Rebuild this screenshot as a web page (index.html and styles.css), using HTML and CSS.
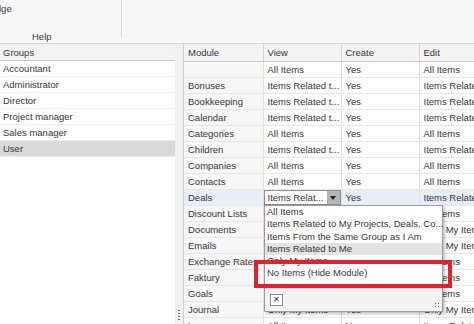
FILE: index.html
```html
<!DOCTYPE html>
<html lang="en">
<head>
  <meta charset="UTF-8">
  <title>Permissions</title>
  <link rel="stylesheet" href="styles.css">
</head>
<body>

<header class="ribbon">
  <div class="ribbon-group">
    <div class="ribbon-title">lge</div>
    <div class="ribbon-label">Help</div>
  </div>
  <div class="ribbon-sep"></div>
</header>

<div class="main">
  <div class="groups">
    <div class="groups-head">Groups</div>
    <div class="group-row">Accountant</div>
    <div class="group-row">Administrator</div>
    <div class="group-row">Director</div>
    <div class="group-row">Project manager</div>
    <div class="group-row">Sales manager</div>
    <div class="group-row selected">User</div>
  </div>

  <div class="splitter"><span class="grip"></span></div>

  <div class="grid-wrap">
    <table class="grid">
      <colgroup>
        <col class="c-module"><col class="c-view"><col class="c-create"><col class="c-edit">
      </colgroup>
      <thead>
        <tr><th>Module</th><th>View</th><th>Create</th><th>Edit</th></tr>
      </thead>
      <tbody>
        <tr><td class="mod"></td><td>All Items</td><td>Yes</td><td>All Items</td></tr>
        <tr><td class="mod">Bonuses</td><td>Items Related t...</td><td>Yes</td><td>Items Related t...</td></tr>
        <tr><td class="mod">Bookkeeping</td><td>Items Related t...</td><td>Yes</td><td>Items Related t...</td></tr>
        <tr><td class="mod">Calendar</td><td>Items Related t...</td><td>Yes</td><td>Items Related t...</td></tr>
        <tr><td class="mod">Categories</td><td>All Items</td><td>Yes</td><td>All Items</td></tr>
        <tr><td class="mod">Children</td><td>Items Related t...</td><td>Yes</td><td>Items Related t...</td></tr>
        <tr><td class="mod">Companies</td><td>All Items</td><td>Yes</td><td>All Items</td></tr>
        <tr><td class="mod">Contacts</td><td>All Items</td><td>Yes</td><td>All Items</td></tr>
        <tr class="active">
          <td class="mod">Deals</td>
          <td class="combo-cell">
            <div class="combo">
              <span class="combo-text">Items Relat...</span>
              <span class="combo-btn"></span>
            </div>
          </td>
          <td>Yes</td><td>Items Related t...</td>
        </tr>
        <tr><td class="mod">Discount Lists</td><td>All Items</td><td>Yes</td><td>All Items</td></tr>
        <tr><td class="mod">Documents</td><td>Only My Items</td><td>Yes</td><td>Only My Items</td></tr>
        <tr><td class="mod">Emails</td><td>Only My Items</td><td>Yes</td><td>Only My Items</td></tr>
        <tr><td class="mod">Exchange Rates</td><td>All Items</td><td>Yes</td><td>All Items</td></tr>
        <tr><td class="mod">Faktury</td><td>All Items</td><td>Yes</td><td>All Items</td></tr>
        <tr><td class="mod">Goals</td><td>All Items</td><td>Yes</td><td>All Items</td></tr>
        <tr><td class="mod">Journal</td><td>Only My Items</td><td>Yes</td><td>Only My Items</td></tr>
        <tr><td class="mod">League</td><td>All Items</td><td>Yes</td><td>Items Related t...</td></tr>
      </tbody>
    </table>
  </div>
</div>

<!-- dropdown list of the View cell -->
<div class="popup">
  <ul class="popup-list">
    <li>All Items</li>
    <li>Items Related to My Projects, Deals, Co...</li>
    <li>Items From the Same Group as I Am</li>
    <li class="hover">Items Related to Me</li>
    <li>Only My Items</li>
    <li>No Items (Hide Module)</li>
  </ul>
  <div class="popup-foot">
    <span class="close-btn">&#x2715;</span>
    <span class="resize-grip"></span>
  </div>
</div>

<div class="red-box"></div>

</body>
</html>
```

FILE: styles.css
```css
body {
  margin: 0;
  padding: 0;
  width: 474px;
  height: 324px;
  overflow: hidden;
  background-color: #f0f0f0;
  font-family: "Liberation Sans", Arial, sans-serif;
  font-size: 9.5px;
  color: #363636;
  position: relative;
}

.ribbon {
  height: 44px;
  background-color: #f7f7f7;
  border-bottom: 1px solid #d6d6d6;
  display: flex;
  box-sizing: border-box;
}

.ribbon-group {
  width: 121px;
}

.ribbon-title {
  padding: 3px 0 0 0;
  margin-left: -1px;
}

.ribbon-label {
  padding: 17px 0 0 32px;
}

.ribbon-sep {
  width: 1px;
  height: 38px;
  background-color: #dcdcdc;
  border-right: 1px solid #fff;
}

.main {
  display: flex;
  height: 280px;
}

.groups {
  width: 175px;
  background-color: #fff;
}

.groups-head {
  height: 17px;
  line-height: 17px;
  padding-left: 3px;
  background-color: #f3f3f3;
  border-bottom: 1px solid #c9c9c9;
  box-sizing: border-box;
}

.group-row {
  height: 16px;
  line-height: 15px;
  padding-left: 3px;
  border-bottom: 1px solid #ececec;
  box-sizing: border-box;
}

.group-row.selected {
  background-color: #d9d9d9;
}

.splitter {
  width: 8px;
  background-color: #f0f0f0;
  display: flex;
  align-items: flex-end;
  justify-content: center;
  padding-bottom: 4px;
  box-sizing: border-box;
}

.grip {
  width: 2px;
  height: 11px;
  background-image: radial-gradient(circle, #6d6d6d 0.8px, transparent 1px);
  background-size: 2px 3px;
}

.grid-wrap {
  flex: 1;
  overflow: hidden;
  background-color: #fff;
  border-left: 1px solid #d0d0d0;
}

.grid {
  border-collapse: collapse;
  table-layout: fixed;
  width: 320px;
}

.c-module { width: 79px; }
.c-view { width: 78px; }
.c-create { width: 78px; }
.c-edit { width: 85px; }

.grid th {
  height: 17px;
  padding: 0 0 0 4px;
  text-align: left;
  font-weight: normal;
  background-color: #f3f3f3;
  border-right: 1px solid #d4d4d4;
  border-bottom: 1px solid #c9c9c9;
  box-sizing: border-box;
}

.grid td {
  height: 16px;
  padding: 0 0 0 4px;
  white-space: nowrap;
  overflow: hidden;
  border-right: 1px solid #e0e0e0;
  border-bottom: 1px solid #e6e6e6;
  box-sizing: border-box;
}

.grid td.mod {
  background-color: #f7f7f7;
}

.grid tr.active td {
  background-color: #e6eff9;
}

.grid td.combo-cell {
  padding: 0;
  background-color: #fff;
}

.combo {
  display: flex;
  height: 15px;
  border: 1px solid #8e8e8e;
  background-color: #fff;
  box-sizing: border-box;
}

.combo-text {
  flex: 1;
  padding-left: 3px;
  line-height: 13px;
}

.combo-btn {
  width: 13px;
  background-color: #b4b4b4;
  position: relative;
}

.combo-btn::after {
  content: "";
  position: absolute;
  left: 3px;
  top: 5px;
  border-left: 3.5px solid transparent;
  border-right: 3.5px solid transparent;
  border-top: 4px solid #1e1e1e;
}

.popup {
  position: absolute;
  left: 264px;
  top: 205px;
  width: 179px;
  height: 107px;
  background-color: #fff;
  border: 1px solid #9a9a9a;
  box-shadow: 2px 2px 3px rgba(0, 0, 0, 0.25);
  box-sizing: border-box;
  display: flex;
  flex-direction: column;
}

.popup-list {
  list-style: none;
  margin: 0;
  padding: 0;
  flex: 1;
}

.popup-list li {
  height: 12.3px;
  line-height: 12.3px;
  padding-left: 2px;
  white-space: nowrap;
}

.popup-list li.hover {
  background-color: #e3e3e3;
}

.popup-foot {
  height: 22px;
  background-color: #f2f2f2;
  border-top: 1px solid #dcdcdc;
  display: flex;
  align-items: center;
  justify-content: space-between;
  padding: 0 2px 0 5px;
}

.close-btn {
  width: 11px;
  height: 10px;
  border: 1px solid #8a8a8a;
  background-color: #fff;
  font-size: 8px;
  line-height: 10px;
  text-align: center;
  color: #333;
}

.resize-grip {
  align-self: flex-end;
  width: 6px;
  height: 6px;
  margin-bottom: 3px;
  background-image: radial-gradient(circle, #6a6a6a 0.8px, transparent 1px);
  background-size: 3px 3px;
}

.red-box {
  position: absolute;
  left: 254px;
  top: 260px;
  width: 198px;
  height: 28px;
  border: 4px solid #e3202b;
  box-sizing: border-box;
}
```
